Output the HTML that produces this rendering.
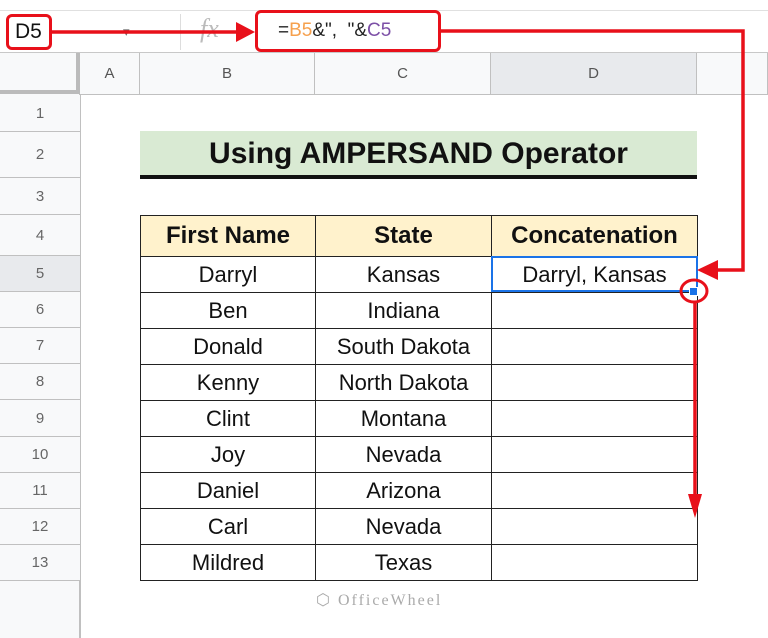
<!DOCTYPE html>
<html><head><style>
*{margin:0;padding:0;box-sizing:border-box}
body{width:768px;height:638px;background:#fff;position:relative;overflow:hidden;font-family:"Liberation Sans",Arial,sans-serif}
.a{position:absolute}
.rh{position:absolute;left:0;width:80px;background:#f8f9fa;border-bottom:1px solid #c0c0c0;color:#666;font-size:15px;text-align:center}
.ch{position:absolute;top:53px;height:41px;background:#f8f9fa;border-right:1px solid #c0c0c0;color:#555;font-size:15px;text-align:center;line-height:41px}
td{border:1.5px solid #222;text-align:center;font-size:22px;color:#111;padding:0;height:36px;white-space:nowrap}
</style></head><body>
<div class="a" style="left:0;top:10px;width:768px;height:1px;background:#e0e0e0"></div>
<div class="a" style="left:0;top:52px;width:768px;height:1px;background:#c8c8c8"></div>
<div class="a" style="left:123px;top:24px;font-size:13px;color:#666">▾</div>
<div class="a" style="left:180px;top:14px;width:1px;height:36px;background:#ddd"></div>
<div class="a" style="left:200px;top:14px;font-family:'Liberation Serif',serif;font-style:italic;font-size:26px;color:#bbb">fx</div>
<div class="a" style="left:6px;top:14px;width:46px;height:36px;border:3px solid #e8101a;border-radius:6px;font-size:21px;line-height:30px;padding-left:6px;color:#111">D5</div>
<div class="a" style="left:255px;top:10px;width:186px;height:42px;border:3px solid #e8101a;border-radius:6px;font-size:19px;line-height:36px;padding-left:20px;color:#222">=<span style="color:#f6a04d">B5</span>&amp;",&nbsp; "&amp;<span style="color:#7c4fa6">C5</span></div>
<div class="a" style="left:0;top:53px;width:80px;height:41px;background:#f8f9fa;border-right:4px solid #bbb;border-bottom:4px solid #bbb"></div>
<div class="ch" style="left:80px;width:60px">A</div>
<div class="ch" style="left:140px;width:175px">B</div>
<div class="ch" style="left:315px;width:176px">C</div>
<div class="ch" style="left:491px;width:206px;background:#e8eaed">D</div>
<div class="ch" style="left:697px;width:71px"></div>
<div class="a" style="left:0;top:94px;width:768px;height:1px;background:#c0c0c0"></div>
<div class="a" style="left:0;top:94px;width:80px;height:544px;background:#f8f9fa;border-right:1px solid #c0c0c0"></div>
<div class="rh" style="top:95px;height:37px;line-height:37px">1</div>
<div class="rh" style="top:132px;height:46px;line-height:46px">2</div>
<div class="rh" style="top:178px;height:37px;line-height:37px">3</div>
<div class="rh" style="top:215px;height:41px;line-height:41px">4</div>
<div class="rh" style="top:256px;height:36px;line-height:36px;background:#e8eaed">5</div>
<div class="rh" style="top:292px;height:36px;line-height:36px">6</div>
<div class="rh" style="top:328px;height:36px;line-height:36px">7</div>
<div class="rh" style="top:364px;height:36px;line-height:36px">8</div>
<div class="rh" style="top:400px;height:37px;line-height:37px">9</div>
<div class="rh" style="top:437px;height:36px;line-height:36px">10</div>
<div class="rh" style="top:473px;height:36px;line-height:36px">11</div>
<div class="rh" style="top:509px;height:36px;line-height:36px">12</div>
<div class="rh" style="top:545px;height:36px;line-height:36px">13</div>
<div class="a" style="left:80px;top:94px;width:1px;height:544px;background:#c0c0c0"></div>
<div class="a" style="left:140px;top:131px;width:557px;height:44px;background:#d9ead3;font-weight:bold;font-size:30px;text-align:center;line-height:46px;color:#111;white-space:nowrap">Using AMPERSAND Operator</div>
<div class="a" style="left:140px;top:175px;width:557px;height:4px;background:#111"></div>
<table class="a" style="left:140px;top:215px;border-collapse:collapse;width:558px">
<tr style="background:#fff2cc"><td style="width:175px;height:41px;font-weight:bold;font-size:24px">First Name</td><td style="width:176px;font-weight:bold;font-size:24px">State</td><td style="width:206px;font-weight:bold;font-size:24px">Concatenation</td></tr>
<tr><td>Darryl</td><td>Kansas</td><td>Darryl, Kansas</td></tr>
<tr><td>Ben</td><td>Indiana</td><td></td></tr>
<tr><td>Donald</td><td>South Dakota</td><td></td></tr>
<tr><td>Kenny</td><td>North Dakota</td><td></td></tr>
<tr><td>Clint</td><td>Montana</td><td></td></tr>
<tr><td>Joy</td><td>Nevada</td><td></td></tr>
<tr><td>Daniel</td><td>Arizona</td><td></td></tr>
<tr><td>Carl</td><td>Nevada</td><td></td></tr>
<tr><td>Mildred</td><td>Texas</td><td></td></tr>
</table>
<div class="a" style="left:491px;top:256px;width:207px;height:36px;border:2px solid #1a73e8"></div>
<div class="a" style="left:689px;top:287px;width:9px;height:9px;background:#1a73e8;border:1px solid #fff"></div>
<svg class="a" style="left:0;top:0" width="768" height="638">
<g stroke="#e8101a" stroke-width="3.5" fill="none">
<line x1="52" y1="32" x2="240" y2="32"/>
<polyline points="441,31 743,31 743,270 712,270"/>
<ellipse cx="694" cy="291" rx="13" ry="11" stroke-width="3"/>
<line x1="695" y1="302" x2="695" y2="500"/>
</g>
<g fill="#e8101a">
<polygon points="255,32 236,22 236,42"/>
<polygon points="697,270 718,260 718,280"/>
<polygon points="695,518 688,494 702,494"/>
</g>
</svg>
<div class="a" style="left:316px;top:590px;font-family:'Liberation Serif',serif;font-size:16px;letter-spacing:2px;color:#aaa">⬡ OfficeWheel</div>
</body></html>
